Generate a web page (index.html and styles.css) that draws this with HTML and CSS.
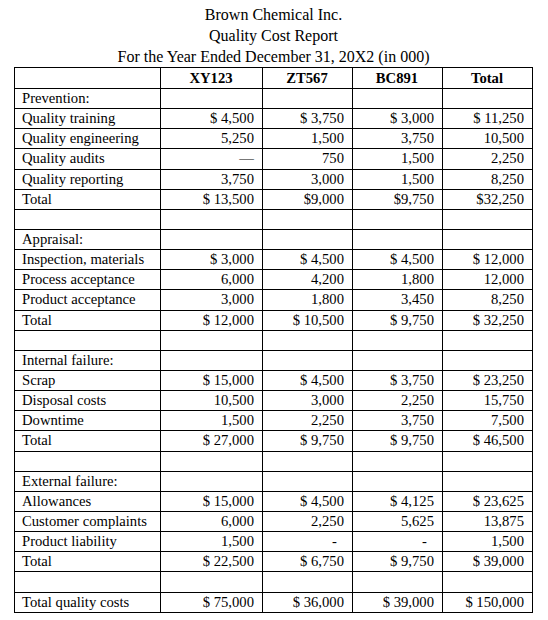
FILE: index.html
```html
<!DOCTYPE html>
<html>
<head>
<meta charset="utf-8">
<link rel="stylesheet" href="styles.css">
</head>
<body>
<div class="report">
  <div class="title">
    <div class="title-line">Brown Chemical Inc.</div>
    <div class="title-line">Quality Cost Report</div>
    <div class="title-line">For the Year Ended December 31, 20X2 (in 000)</div>
  </div>
  <table class="grid">
    <colgroup>
      <col class="c-label"><col class="c-num"><col class="c-num2"><col class="c-num2"><col class="c-num2">
    </colgroup>
    <thead>
      <tr class="head"><th></th><th>XY123</th><th>ZT567</th><th>BC891</th><th>Total</th></tr>
    </thead>
    <tbody>
      <tr><td>Prevention:</td><td></td><td></td><td></td><td></td></tr>
      <tr><td>Quality training</td><td>$ 4,500</td><td>$ 3,750</td><td>$ 3,000</td><td>$ 11,250</td></tr>
      <tr><td>Quality engineering</td><td>5,250</td><td>1,500</td><td>3,750</td><td>10,500</td></tr>
      <tr><td>Quality audits</td><td>—</td><td>750</td><td>1,500</td><td>2,250</td></tr>
      <tr><td>Quality reporting</td><td>3,750</td><td>3,000</td><td>1,500</td><td>8,250</td></tr>
      <tr><td>Total</td><td>$ 13,500</td><td>$9,000</td><td>$9,750</td><td>$32,250</td></tr>
      <tr><td></td><td></td><td></td><td></td><td></td></tr>
      <tr><td>Appraisal:</td><td></td><td></td><td></td><td></td></tr>
      <tr><td>Inspection, materials</td><td>$ 3,000</td><td>$ 4,500</td><td>$ 4,500</td><td>$ 12,000</td></tr>
      <tr><td>Process acceptance</td><td>6,000</td><td>4,200</td><td>1,800</td><td>12,000</td></tr>
      <tr><td>Product acceptance</td><td>3,000</td><td>1,800</td><td>3,450</td><td>8,250</td></tr>
      <tr><td>Total</td><td>$ 12,000</td><td>$ 10,500</td><td>$ 9,750</td><td>$ 32,250</td></tr>
      <tr><td></td><td></td><td></td><td></td><td></td></tr>
      <tr><td>Internal failure:</td><td></td><td></td><td></td><td></td></tr>
      <tr><td>Scrap</td><td>$ 15,000</td><td>$ 4,500</td><td>$ 3,750</td><td>$ 23,250</td></tr>
      <tr><td>Disposal costs</td><td>10,500</td><td>3,000</td><td>2,250</td><td>15,750</td></tr>
      <tr><td>Downtime</td><td>1,500</td><td>2,250</td><td>3,750</td><td>7,500</td></tr>
      <tr><td>Total</td><td>$ 27,000</td><td>$ 9,750</td><td>$ 9,750</td><td>$ 46,500</td></tr>
      <tr><td></td><td></td><td></td><td></td><td></td></tr>
      <tr><td>External failure:</td><td></td><td></td><td></td><td></td></tr>
      <tr><td>Allowances</td><td>$ 15,000</td><td>$ 4,500</td><td>$ 4,125</td><td>$ 23,625</td></tr>
      <tr><td>Customer complaints</td><td>6,000</td><td>2,250</td><td>5,625</td><td>13,875</td></tr>
      <tr><td>Product liability</td><td>1,500</td><td class="dash">-</td><td class="dash">-</td><td>1,500</td></tr>
      <tr><td>Total</td><td>$ 22,500</td><td>$ 6,750</td><td>$ 9,750</td><td>$ 39,000</td></tr>
      <tr><td></td><td></td><td></td><td></td><td></td></tr>
      <tr><td>Total quality costs</td><td>$ 75,000</td><td>$ 36,000</td><td>$ 39,000</td><td>$ 150,000</td></tr>
    </tbody>
  </table>
</div>
</body>
</html>
```
FILE: styles.css
```css
html, body {
  margin: 0;
  padding: 0;
  background: #ffffff;
}

body {
  font-family: "Liberation Serif", "Times New Roman", serif;
  color: #000000;
}

.report {
  width: 519px;
  margin-left: 14px;
  padding-top: 4px;
}

.title {
  text-align: center;
  font-size: 16px;
  line-height: 21px;
}

.grid {
  border-collapse: collapse;
  width: 519px;
  table-layout: fixed;
  font-size: 14.67px;
}

.c-label { width: 146px; }
.c-num { width: 102px; }
.c-num2 { width: 90px; }

.grid th,
.grid td {
  border: 1px solid #000000;
  height: 19.15px;
  padding: 0 8px 0 7px;
  line-height: 19px;
  white-space: nowrap;
  overflow: hidden;
}

.grid th {
  font-weight: bold;
  text-align: center;
  height: 20px;
}

.grid td {
  text-align: right;
}

.grid td:first-child {
  text-align: left;
}

.grid td.dash {
  padding-right: 15px;
}
```
